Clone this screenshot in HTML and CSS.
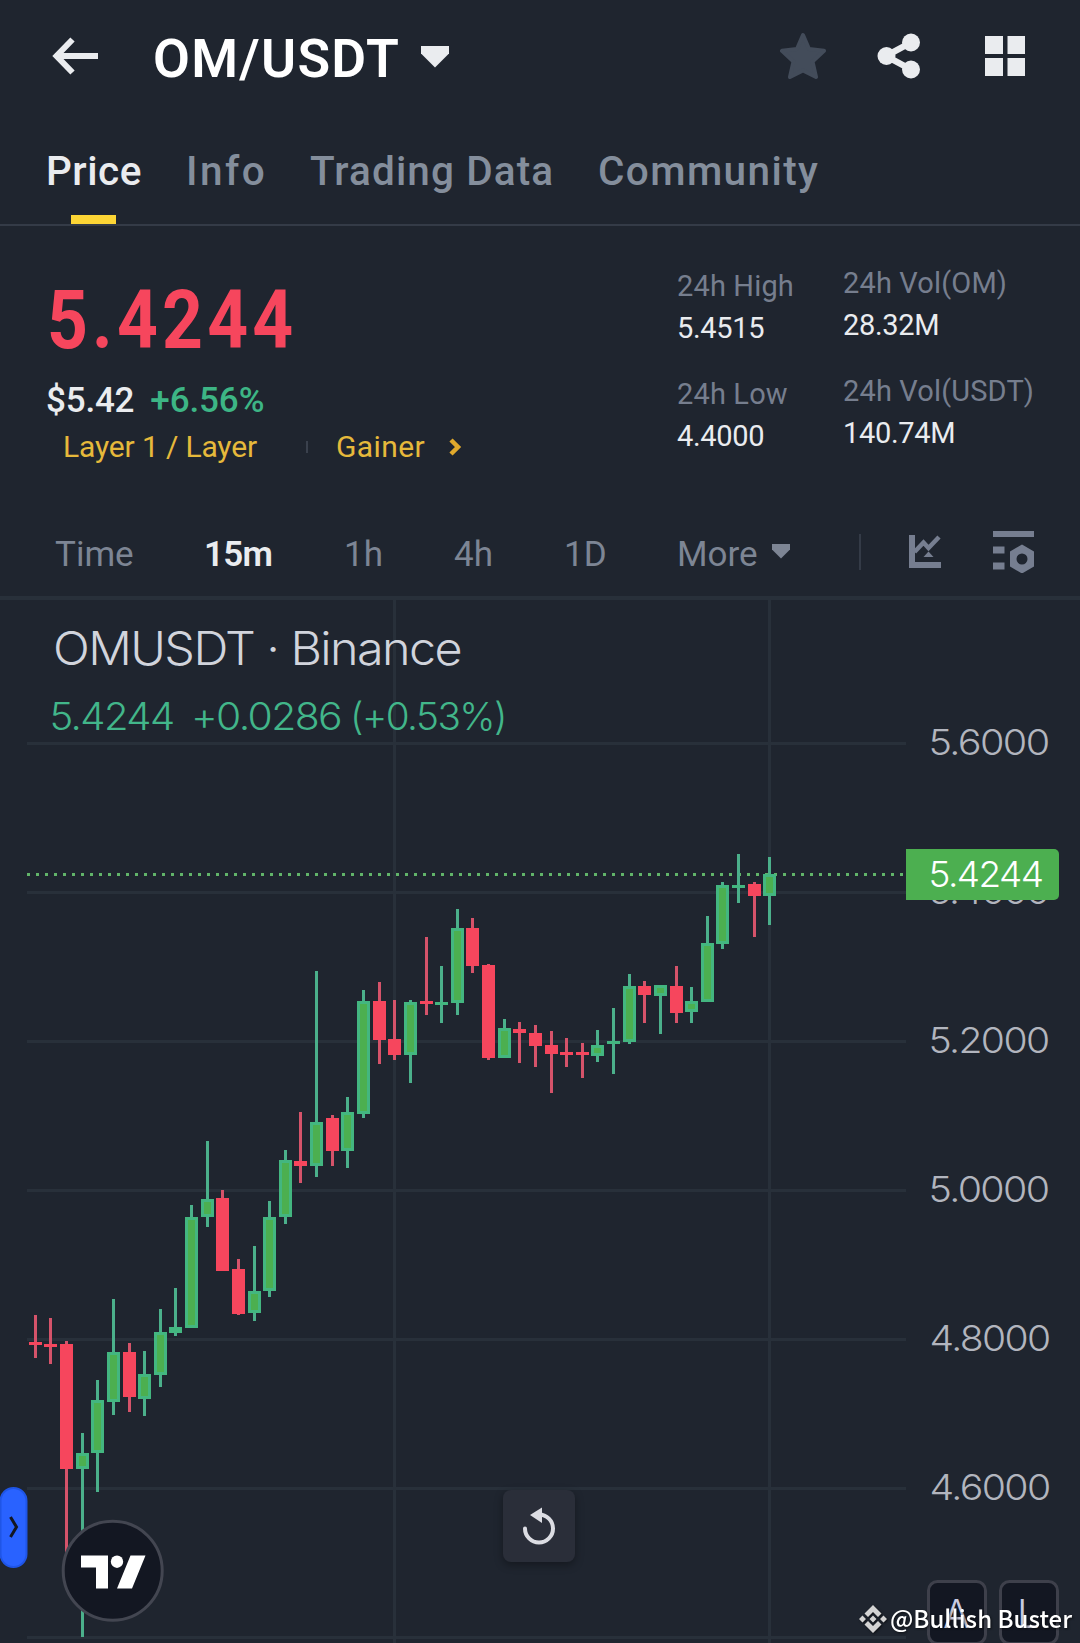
FILE: index.html
```
<!DOCTYPE html>
<html lang="en">
<head>
<meta charset="utf-8">
<title>OM/USDT</title>
<link rel="stylesheet" href="styles.css">
</head>
<body>
<header class="topbar">
  <svg class="back" width="48" height="38" viewBox="0 0 48 38"><path d="M20.500 2.500 4.500 19l16 16.500M5 19h41" fill="none" stroke="#eaecef" stroke-width="6"/></svg>
  <h1 class="pair">OM/USDT</h1>
  <svg class="pair-caret" width="28" height="22" viewBox="0 0 28 22"><path d="M0 0h28v7.500L14 21.500 0 7.500z" fill="#eaecef"/></svg>
  <div class="actions">
    <svg width="46" height="48" viewBox="0 0 46 48"><path d="M23 3l6 14 15 1.800-11.500 10.700L36 45 23 38.500 10 45l3.500-15.500L2 18.800 17 17z" fill="#434c5a" stroke="#434c5a" stroke-width="4" stroke-linejoin="round"/></svg>
    <svg class="share" width="44" height="46" viewBox="0 0 44 46"><path d="M34 9.500 9 23l25 13.500" fill="none" stroke="#eaecef" stroke-width="6.500"/><g fill="#eaecef"><circle cx="34" cy="9.500" r="9"/><circle cx="9.500" cy="23" r="9"/><circle cx="34" cy="36.500" r="9"/></g></svg>
    <svg class="grid" width="40" height="40" viewBox="0 0 40 40"><path d="M0 0h18v18H0zM22.500 0H40v18H22.500zM0 22h18v18H0zM22.500 22H40v18H22.500z" fill="#eaecef"/></svg>
  </div>
</header>

<nav class="tabs">
  <a class="tab active">Price</a>
  <a class="tab info">Info</a>
  <a class="tab trading">Trading Data</a>
  <a class="tab community">Community</a>
</nav>

<section class="summary">
  <div class="quote">
    <div class="last">5.4244</div>
    <div class="change"><span class="fiat">$5.42</span><span class="up">+6.56%</span></div>
    <div class="tags">
      <span class="tag-layer">Layer 1 / Layer</span><i class="tag-sep"></i><span class="tag-gainer">Gainer</span>
      <svg width="13" height="18" viewBox="0 0 13 18"><path d="M2 2l7 7-7 7" fill="none" stroke="#e0a92c" stroke-width="4.500"/></svg>
    </div>
  </div>
  <div class="stats">
    <dl><dt>24h High</dt><dd>5.4515</dd></dl>
    <dl><dt>24h Low</dt><dd>4.4000</dd></dl>
  </div>
  <div class="stats volume">
    <dl><dt>24h Vol(OM)</dt><dd>28.32M</dd></dl>
    <dl><dt>24h Vol(USDT)</dt><dd>140.74M</dd></dl>
  </div>
</section>

<div class="intervals">
  <span>Time</span>
  <span class="selected">15m</span>
  <span>1h</span>
  <span>4h</span>
  <span>1D</span>
  <span class="more">More <svg width="18" height="15" viewBox="0 0 18 15"><path d="M0 0h18v5.500L9 14.500 0 5.500z" fill="#7d8594"/></svg></span>
  <i class="divider"></i>
  <svg width="32" height="33" viewBox="0 0 32 33"><path d="M3 0v30h29" fill="none" stroke="#767e90" stroke-width="6"/><path d="M5.500 17l9-9.500 5 5.500L30 2" fill="none" stroke="#767e90" stroke-width="4.500"/><path d="M19.500 16.500l5 5.500h-10z" fill="#767e90"/></svg>
  <svg width="42" height="43" viewBox="0 0 42 43"><g fill="#767e90"><path d="M0 1h41v6H0zM0 16.500h11.500v7H0zM0 32.500h11.500v7H0z"/><path fill-rule="evenodd" d="M29 14.500l12 7v15l-12 7-12-7v-15zM29 23.500a5.500 5.500 0 1 0 0 11 5.500 5.500 0 0 0 0-11z"/></g></svg>
</div>

<main class="chart">
  <svg class="plot" width="1080" height="1047" viewBox="0 596 1080 1047">
    <g class="gridlines">
      <path d="M0 598h1080" stroke-width="4"/>
      <path d="M27 743.500h879M27 892.500h879M27 1041.500h879M27 1190.500h879M27 1339.500h879M27 1488.500h879M27 1637.500h879M394.500 596v1047M769.500 596v1047"/>
    </g>
    <path class="last-line" d="M27 874.500h879"/>
    <g id="candles"></g>
    <text class="symbol" x="53" y="665" textLength="408" lengthAdjust="spacingAndGlyphs">OMUSDT · Binance</text>
    <g class="delta">
      <text x="49.500" y="730" textLength="124" lengthAdjust="spacingAndGlyphs">5.4244</text>
      <text x="191" y="730" textLength="150" lengthAdjust="spacingAndGlyphs">+0.0286</text>
      <text x="350" y="730" textLength="156" lengthAdjust="spacingAndGlyphs">(+0.53%)</text>
    </g>
    <g class="axis">
      <text x="928.500" y="755" textLength="120" lengthAdjust="spacingAndGlyphs">5.6000</text>
      <text x="928.500" y="904" textLength="120" lengthAdjust="spacingAndGlyphs">5.4000</text>
      <text x="928.500" y="1053" textLength="120" lengthAdjust="spacingAndGlyphs">5.2000</text>
      <text x="928.500" y="1202" textLength="120" lengthAdjust="spacingAndGlyphs">5.0000</text>
      <text x="929.500" y="1351" textLength="120" lengthAdjust="spacingAndGlyphs">4.8000</text>
      <text x="929.500" y="1500" textLength="120" lengthAdjust="spacingAndGlyphs">4.6000</text>
    </g>
    <path d="M906 849h148a5 5 0 0 1 5 5v41a5 5 0 0 1-5 5H906z" fill="#4caf50"/>
    <text class="price-tag" x="928.500" y="887" textLength="114" lengthAdjust="spacingAndGlyphs">5.4244</text>
    <rect x="0.500" y="1488" width="26" height="79" rx="13" fill="#2962ff" stroke="#1f55e6" stroke-width="2"/>
    <path d="M10.500 1517l6 10-6 10" fill="none" stroke="#131722" stroke-width="3"/>
    <circle cx="112.700" cy="1570.700" r="49.500" fill="#131722" stroke="#434651" stroke-width="3"/>
    <g fill="#fff"><path d="M81 1555.500h27v33H96v-21H81zM130.500 1555.500h15l-13.500 33h-15z"/><circle cx="117" cy="1561.700" r="6.200"/></g>
    <g class="reset">
      <rect x="503" y="1490" width="72" height="72" rx="8" fill="#2a2e39"/>
      <path d="M525 1528.500a14 14 0 1 0 14-14" fill="none" stroke="#dcdde3" stroke-width="4" stroke-linecap="round"/>
      <path d="M530 1515l12-7.500v15.500z" fill="#dcdde3"/>
    </g>
    <g fill="#131722" stroke="#3e404b" stroke-width="3"><rect x="928.500" y="1581.500" width="57" height="62" rx="9"/><rect x="1000.500" y="1581.500" width="57" height="62" rx="9"/></g>
    <g class="scale"><text x="943" y="1627.500">A</text><text x="1017" y="1627.500">L</text></g>
    <g class="watermark">
      <path d="M873 1605l8.500 8.500-3.500 3.500-5-5-5 5-3.500-3.500zM873 1633l8.500-8.500-3.500-3.500-5 5-5-5-3.500 3.500zM862.500 1615.500l3.500 3.500-3.500 3.500-3.500-3.500zM883.500 1615.500l3.500 3.500-3.500 3.500-3.500-3.500zM873 1615.500l3.500 3.500-3.500 3.500-3.500-3.500z" fill="#d3d3d3"/>
      <text x="890" y="1628" textLength="182">@Bullish Buster</text>
    </g>
  </svg>
</main>
<script src="chart.js"></script>
</body>
</html>
```
FILE: styles.css
```
* { box-sizing: border-box; }
body { margin: 0; width: 1080px; background: #1f252f; color: #eaecef; font-family: Roboto, "Liberation Sans", sans-serif; overflow: hidden; }
svg { display: block; flex: none; }

.topbar { display: flex; align-items: center; height: 112px; padding: 0 55px 0 52px; }
.pair { margin: 5px 0 0 53px; width: 247px; font-size: 53.5px; line-height: 60px; font-weight: 600; letter-spacing: 1.3px; color: #fff; white-space: nowrap; }
.pair-caret { margin-left: 21px; margin-top: 2px; }
.actions { display: flex; align-items: center; margin-left: auto; }
.share { margin-left: 51px; }
.grid { margin-left: 64px; }

.tabs { display: flex; height: 114px; padding: 34px 0 0 46px; border-bottom: 2px solid #343b47; color: #848e9c; font-size: 40.5px; font-weight: 500; line-height: 50px; white-space: nowrap; }
.tab { width: 94px; margin-right: 46px; letter-spacing: 0.5px; }
.tab.active { color: #eaecef; }
.tab.active::after { content: ""; display: block; width: 45px; height: 9px; margin: 19px 0 0 25px; background: #fcd535; }
.tab.info { width: 78px; letter-spacing: 2.5px; }
.tab.trading { width: 242px; letter-spacing: 1.1px; }
.tab.community { width: 222px; margin: 0; letter-spacing: 1.4px; }

.summary { display: flex; height: 274px; }
.quote { width: 677px; padding: 49px 0 0 46px; }
.last { height: 90px; margin-left: 1px; font-size: 82px; line-height: 90px; font-weight: 700; letter-spacing: 4.8px; color: #f6465d; transform: scaleX(0.87); transform-origin: left; }
.change { display: flex; gap: 16px; margin-top: 16px; font-size: 35px; line-height: 40px; font-weight: 500; }
.fiat { letter-spacing: -0.2px; }
.up { color: #3db585; letter-spacing: -0.1px; }
.tags { display: flex; align-items: center; margin: 9px 0 0 17px; font-size: 30px; line-height: 34px; color: #e6b93b; }
.tag-layer { width: 243px; letter-spacing: -0.15px; }
.tag-sep { width: 2px; height: 12px; margin-right: 28px; background: #3a414d; }
.tag-gainer { width: 113px; letter-spacing: 0.4px; }
.stats { width: 166px; padding-top: 39px; font-size: 29px; line-height: 42px; white-space: nowrap; }
.volume { padding-top: 36px; }
.stats dl { margin: 0 0 24px; }
.stats dt { color: #767e8e; letter-spacing: 0.15px; }
.stats dd { margin: 0; letter-spacing: -0.3px; }

.intervals { display: grid; grid-template-columns: 149px 140px 110px 110px 113px 182px 50px 84px 42px; align-items: center; height: 96px; padding: 14px 0 0 55px; color: #7d8594; font-size: 35px; line-height: 40px; }
.intervals .selected { font-weight: 600; color: #eaecef; letter-spacing: -0.7px; }
.more { display: flex; gap: 14px; }
.more svg { margin-top: 9px; }
.divider { width: 2px; height: 36px; margin-top: -7px; background: #343b47; }
.intervals > svg { margin-top: -7px; }

.plot { font-family: Inter, "Liberation Sans", sans-serif; font-weight: 320; letter-spacing: -1.5px; }
.gridlines { fill: none; stroke: #28303a; stroke-width: 3; }
.last-line { fill: none; stroke: #62b56a; stroke-width: 3; stroke-dasharray: 3 6; }
.symbol { font-size: 46px; fill: #d1d4dc; }
.delta { font-size: 38px; fill: #42b68a; }
.axis { font-size: 36px; fill: #b2b5be; }
.price-tag { font-size: 36px; fill: #fff; }
.scale { font-size: 40px; fill: #c9cbe0; }
.reset { filter: drop-shadow(0 3px 4px rgba(0, 0, 0, 0.35)); }
.watermark { font-family: "Noto Sans CJK SC", sans-serif; font-size: 24px; font-weight: 500; letter-spacing: 0; fill: #fff; filter: drop-shadow(1px 1px 1px rgba(0, 0, 0, 0.6)); }

.up-candle .wick { fill: #4bb08b; }
.up-candle .body { fill: #43b680; }
.up-candle .core { fill: #4caf50; }
.down-candle .wick { fill: #d5536a; }
.down-candle .body { fill: #f6465d; }
```
FILE: chart.js
```
// Each candle: direction, wick top, body top, body bottom, wick bottom.
const candles = [
  ["d",1315,1342,1345,1358],["d",1318,1344,1347,1364],["d",1341,1344,1469,1560],["u",1433,1453,1469,1637],
  ["u",1380,1400,1453,1492],["u",1299,1352,1402,1415],["d",1343,1352,1397,1412],["u",1351,1374,1399,1416],
  ["u",1309,1332,1375,1387],["u",1288,1327,1333,1336],["u",1205,1217,1328,1328],["u",1141,1199,1217,1227],
  ["d",1190,1198,1271,1271],["d",1259,1269,1314,1315],["u",1246,1291,1313,1321],["u",1201,1217,1291,1297],
  ["u",1150,1160,1217,1224],["d",1112,1161,1166,1183],["u",971,1122,1166,1177],["d",1115,1118,1151,1166],
  ["u",1097,1112,1151,1168],["u",990,1001,1114,1118],["d",982,1001,1040,1064],["d",1000,1039,1055,1060],
  ["u",1000,1002,1055,1083],["d",937,1001,1004,1015],["u",966,1002,1005,1023],["u",909,928,1003,1015],
  ["d",918,928,966,973],["d",964,965,1058,1060],["u",1019,1028,1058,1058],["d",1022,1029,1033,1063],
  ["d",1025,1033,1046,1067],["d",1031,1045,1054,1093],["d",1038,1052,1055,1067],["d",1043,1052,1055,1078],
  ["u",1030,1045,1056,1062],["u",1008,1041,1044,1074],["u",974,986,1042,1044],["d",981,986,995,1023],
  ["u",985,985,996,1034],["d",966,986,1013,1023],["u",987,1001,1012,1023],["u",916,943,1002,1002],
  ["u",882,885,944,949],["u",854,885,888,903],["d",882,884,896,937],["u",857,874,896,925]
];

const group = document.getElementById("candles");

function bar(parent, cls, x, y, width, height) {
  const rect = document.createElementNS("http://www.w3.org/2000/svg", "rect");
  rect.setAttribute("class", cls);
  rect.setAttribute("x", x);
  rect.setAttribute("y", y);
  rect.setAttribute("width", width);
  rect.setAttribute("height", height);
  parent.appendChild(rect);
}

candles.forEach(([dir, high, top, bottom, low], i) => {
  const x = 35 + Math.round(i * 15.63 - 0.25);
  const g = document.createElementNS("http://www.w3.org/2000/svg", "g");
  g.setAttribute("class", dir === "u" ? "up-candle" : "down-candle");
  bar(g, "wick", x - 1, high, 3, low - high);
  bar(g, "body", x - 6, top, 13, bottom - top);
  if (dir === "u" && bottom - top > 6) bar(g, "core", x - 3, top + 3, 7, bottom - top - 6);
  group.appendChild(g);
});
```
